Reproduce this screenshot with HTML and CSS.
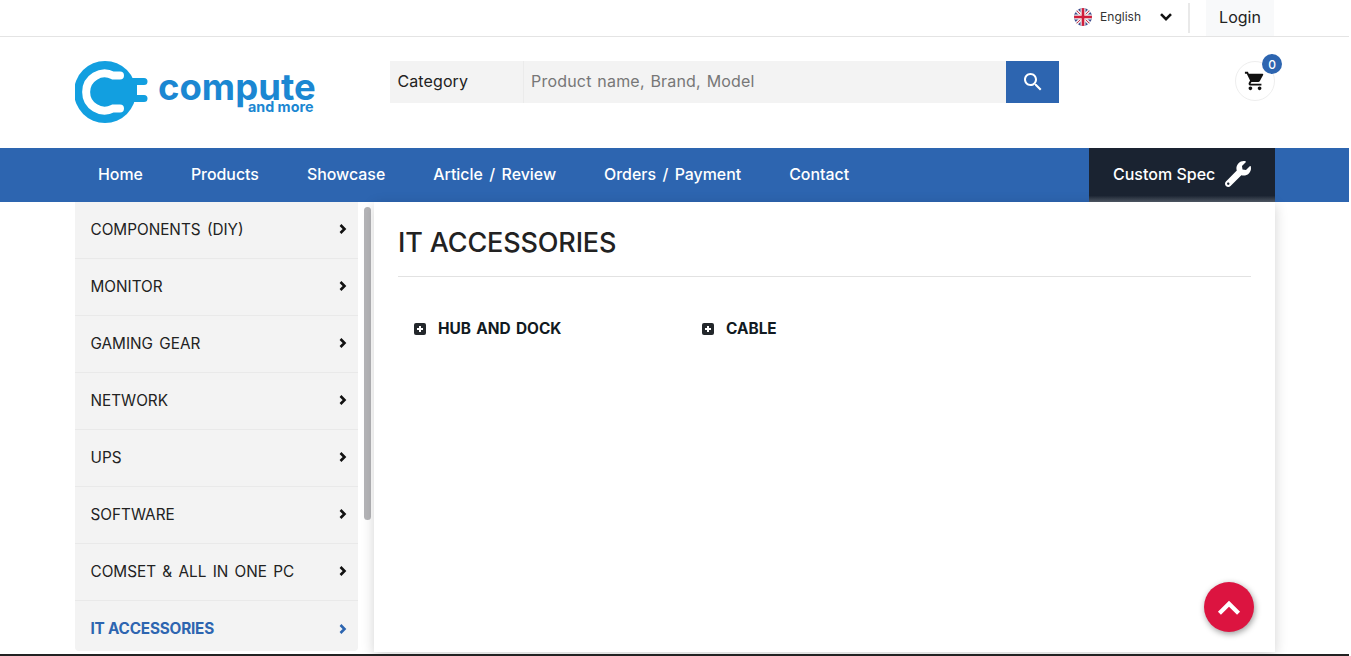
FILE: index.html
```html
<!DOCTYPE html>
<html lang="en">
<head>
<meta charset="utf-8">
<title>Compute and more</title>
<link rel="stylesheet" href="styles.css">
</head>
<body>
<div class="page">
  <div class="topbar">
    <div class="container topbar-in">
      <svg class="flag" viewBox="0 0 18 18"><defs><clipPath id="fc"><circle cx="9" cy="9" r="9"/></clipPath></defs><g clip-path="url(#fc)"><rect width="18" height="18" fill="#3b4a8c"/><path d="M0 0L18 18M18 0L0 18" stroke="#eee" stroke-width="3.4"/><path d="M0 0L18 18M18 0L0 18" stroke="#d8344f" stroke-width="1"/><path d="M9 0V18M0 9H18" stroke="#eee" stroke-width="5"/><path d="M9 0V18M0 9H18" stroke="#d01c3a" stroke-width="2.6"/></g></svg>
      <span class="lang">English</span>
      <svg class="lang-chev" viewBox="0 0 14 10"><path d="M2 2.2L7 7.2L12 2.2" fill="none" stroke="#111" stroke-width="2.6"/></svg>
      <span class="divider"></span>
      <span class="login">Login</span>
    </div>
  </div>
  <header class="container header">
    <svg class="logo" viewBox="0 0 243 64" role="img" aria-label="compute and more">
      <circle cx="30" cy="31" r="31" fill="#129fe0"/>
      <path d="M54 17H62V41H54Z" fill="#129fe0"/>
      <path d="M69 17A3.500 3.500 0 0 1 69 24H60V17ZM69 34A3.500 3.500 0 0 1 69 41H60V34Z" fill="#129fe0"/>
      <path d="M45 14.500L38 14.500A18.500 18.500 0 1 0 38 47.500L45 47.500" fill="none" stroke="#fff" stroke-width="8" stroke-linecap="round"/>
      <text x="83" y="39" class="logo-main">compute</text>
      <text x="173" y="50.500" class="logo-sub">and more</text>
    </svg>
    <div class="search">
      <div class="search-cat"><span>Category</span></div>
      <div class="search-input"><span>Product name, Brand, Model</span></div>
      <div class="search-btn"><svg viewBox="0 0 24 24"><path d="M15.500 14h-.79l-.28-.27C15.410 12.590 16 11.110 16 9.500 16 5.910 13.090 3 9.500 3S3 5.910 3 9.500 5.910 16 9.500 16c1.610 0 3.090-.59 4.230-1.570l.27.28v.79l5 4.990L20.490 19l-4.990-5zm-6 0C7.010 14 5 11.990 5 9.500S7.010 5 9.500 5 14 7.010 14 9.500 11.990 14 9.500 14z"/></svg></div>
    </div>
    <div class="cart">
      <svg viewBox="0 0 24 24"><path d="M7 18c-1.100 0-1.990.9-1.990 2S5.900 22 7 22s2-.9 2-2-.9-2-2-2zM1 2v2h2l3.600 7.590-1.350 2.450c-.16.28-.25.61-.25.96 0 1.100.9 2 2 2h12v-2H7.420c-.14 0-.25-.11-.25-.25l.03-.12.9-1.630h7.450c.75 0 1.410-.41 1.750-1.030l3.580-6.490c.08-.14.12-.31.12-.48 0-.55-.45-1-1-1H5.210l-.94-2H1zm16 16c-1.100 0-1.990.9-1.990 2s.89 2 1.990 2 2-.9 2-2-.9-2-2-2z"/></svg>
      <span class="cart-badge">0</span>
    </div>
  </header>
  <nav class="nav">
    <div class="container nav-in">
      <a class="nav-link">Home</a>
      <a class="nav-link">Products</a>
      <a class="nav-link">Showcase</a>
      <a class="nav-link">Article / Review</a>
      <a class="nav-link">Orders / Payment</a>
      <a class="nav-link">Contact</a>
      <a class="custom-spec"><span>Custom Spec</span>
        <svg viewBox="0 0 512 512"><path d="M507.730 109.100c-2.240-9.030-13.540-12.090-20.120-5.510l-74.360 74.360-67.880-11.310-11.310-67.880 74.360-74.360c6.620-6.620 3.430-17.900-5.660-20.160-47.380-11.740-99.550.91-136.580 37.930-39.640 39.640-50.550 97.100-34.050 147.200L18.740 402.760c-24.990 24.990-24.990 65.510 0 90.500 24.990 24.990 65.510 24.990 90.500 0l213.210-213.210c50.120 16.710 107.470 5.680 147.370-34.220 37.070-37.070 49.700-89.320 37.910-136.730zM64 472c-13.250 0-24-10.750-24-24 0-13.260 10.750-24 24-24s24 10.740 24 24c0 13.250-10.750 24-24 24z"/></svg>
      </a>
    </div>
  </nav>
  <main class="container content">
    <ul class="side">
      <li class="side-item"><span>COMPONENTS (DIY)</span><svg class="chev" viewBox="0 0 8 12"><path d="M1.500 2L5.500 6L1.500 10"/></svg></li>
      <li class="side-item"><span>MONITOR</span><svg class="chev" viewBox="0 0 8 12"><path d="M1.500 2L5.500 6L1.500 10"/></svg></li>
      <li class="side-item"><span>GAMING GEAR</span><svg class="chev" viewBox="0 0 8 12"><path d="M1.500 2L5.500 6L1.500 10"/></svg></li>
      <li class="side-item"><span>NETWORK</span><svg class="chev" viewBox="0 0 8 12"><path d="M1.500 2L5.500 6L1.500 10"/></svg></li>
      <li class="side-item"><span>UPS</span><svg class="chev" viewBox="0 0 8 12"><path d="M1.500 2L5.500 6L1.500 10"/></svg></li>
      <li class="side-item"><span>SOFTWARE</span><svg class="chev" viewBox="0 0 8 12"><path d="M1.500 2L5.500 6L1.500 10"/></svg></li>
      <li class="side-item"><span>COMSET &amp; ALL IN ONE PC</span><svg class="chev" viewBox="0 0 8 12"><path d="M1.500 2L5.500 6L1.500 10"/></svg></li>
      <li class="side-item active"><span>IT ACCESSORIES</span><svg class="chev" viewBox="0 0 8 12"><path d="M1.500 2L5.500 6L1.500 10"/></svg></li>
    </ul>
    <div class="scroll-track"><div class="scroll-thumb"></div></div>
    <section class="panel">
      <h1 class="panel-title">IT ACCESSORIES</h1>
      <div class="cats">
        <div class="cat"><span class="plus"></span>HUB AND DOCK</div>
        <div class="cat"><span class="plus"></span>CABLE</div>
      </div>
    </section>
  </main>
  <div class="bottom-line"></div>
  <div class="to-top"><svg viewBox="0 0 24 16"><path d="M3 13.500L12 4.500L21 13.500" fill="none" stroke="#fff" stroke-width="4"/></svg></div>
</div>
</body>
</html>
```
FILE: styles.css
```css
* { box-sizing: border-box; }
html, body { margin: 0; padding: 0; }
body { font-family: Inter, "Noto Sans", sans-serif; color: #212529; background: #fff; overflow: hidden; }
.page { position: relative; width: 1349px; height: 656px; overflow: hidden; }
.container { width: 1200px; margin-left: 75px; }

.topbar { height: 37px; border-bottom: 1px solid #e4e4e4; }
.topbar-in { display: flex; align-items: center; justify-content: flex-end; height: 36px; padding-right: 1px; }
.flag { width: 18px; height: 18px; margin-top: -3px; }
.lang { font-size: 12px; color: #333; margin-left: 8px; padding-bottom: 3px; }
.lang-chev { width: 14px; height: 10px; margin-left: 18px; margin-top: -2px; }
.divider { width: 2px; height: 30px; background: #e9e9e9; margin-left: 15px; }
.login { height: 36px; width: 68px; margin-left: 16px; background: #f8f9fa; display: flex; align-items: center; justify-content: center; font-size: 16px; color: #222; padding-bottom: 3px; }

.header { display: flex; align-items: flex-start; height: 111px; position: relative; }
.logo { width: 243px; height: 64px; margin-top: 24px; display: block; flex: none; }
.logo-main { font-family: Inter, sans-serif; font-weight: 700; font-size: 36.500px; fill: #1b87d2; }
.logo-sub { font-family: Inter, sans-serif; font-weight: 700; font-size: 14.300px; fill: #1b87d2; }
.search { display: flex; margin-left: 72px; margin-top: 24px; height: 42px; width: 669px; }
.search-cat { width: 134px; background: #f3f3f3; border-right: 1px solid #ebebeb; padding: 0 0 2px 7.500px; display: flex; align-items: center; font-size: 16px; color: #222; letter-spacing: .1px; }
.search-input { flex: 1; background: #f3f3f3; padding: 0 0 2px 7px; display: flex; align-items: center; font-size: 16px; color: #777; word-spacing: 1px; letter-spacing: .2px; }
.search-btn { width: 53px; background: #2d65b0; display: flex; align-items: center; justify-content: center; }
.search-btn svg { width: 24px; height: 24px; fill: #fff; }
.cart { margin-left: auto; margin-top: 24px; width: 40px; height: 40px; border: 1px solid #eee; border-radius: 50%; display: flex; align-items: center; justify-content: center; position: relative; }
.cart svg { width: 22px; height: 22px; fill: #111; }
.cart-badge { position: absolute; top: -8px; right: -8px; width: 20px; height: 20px; border-radius: 50%; background: #2d65b0; color: #fff; font-size: 12px; font-weight: 500; display: flex; align-items: center; justify-content: center; }

.nav { height: 54px; background: #2d65b0; }
.nav-in { display: flex; align-items: stretch; height: 54px; padding-left: 23px; gap: 48px; position: relative; }
.nav-link { display: flex; align-items: center; color: #fff; font-size: 15.900px; font-weight: 500; white-space: pre; word-spacing: 2.200px; padding-bottom: 2px; }
.custom-spec { margin-left: auto; width: 186px; background: linear-gradient(#1a2331 88%, #4d5662); color: #fff; display: flex; align-items: center; gap: 10px; padding: 0 0 2px 24px; font-size: 16px; font-weight: 500; }
.custom-spec svg { width: 26px; height: 26px; fill: #fff; }

.content { display: flex; height: 454px; }
.side { list-style: none; margin: 0; padding: 0; width: 283px; height: 449px; overflow: hidden; background: #f3f3f3; border-radius: 0 0 4px 4px; flex: none; }
.side-item { height: 57px; border-bottom: 1px solid #e9e9e9; padding: 0 11px 2px 15.500px; display: flex; align-items: center; justify-content: space-between; font-size: 15.300px; color: #222; word-spacing: 2px; }
.side-item.active { border-bottom: 0; color: #2d65b0; font-weight: 700; letter-spacing: -.2px; word-spacing: 0; }
.chev { width: 8px; height: 12px; fill: none; stroke: #111; stroke-width: 2.600; }
.active .chev { stroke: #2d65b0; }
.scroll-track { width: 16px; padding: 5px 3px 0 6px; flex: none; }
.scroll-thumb { width: 7px; height: 313px; background: #b5b5b8; border-radius: 4px; }
.panel { flex: 1; background: #fff; padding: 0 24px; box-shadow: 0 3px 12px rgba(0,0,0,.18); height: 450px; }
.panel-title { margin: 0; height: 75px; border-bottom: 1px solid #e2e2e2; display: flex; align-items: center; font-size: 27px; font-weight: 500; letter-spacing: -.15px; color: #222; padding-top: 7px; }
.cats { display: flex; padding: 42px 0 0 16px; }
.cat { width: 288px; display: flex; align-items: center; font-size: 15.400px; font-weight: 700; color: #111a22; word-spacing: 1.700px; }
.plus { width: 12px; height: 12px; margin-right: 12px; border-radius: 2px; background: linear-gradient(#fff,#fff) center/6px 2px no-repeat, linear-gradient(#fff,#fff) center/2px 6px no-repeat, #23272b; }

.bottom-line { height: 2px; background: #222; position: absolute; left: 0; right: 0; bottom: 0; }
.to-top { position: absolute; left: 1204px; top: 582px; width: 50px; height: 50px; border-radius: 50%; background: #dc1440; box-shadow: 1px 2px 6px rgba(0,0,0,.4); display: flex; align-items: center; justify-content: center; }
.to-top svg { width: 26px; height: 17px; }
```
